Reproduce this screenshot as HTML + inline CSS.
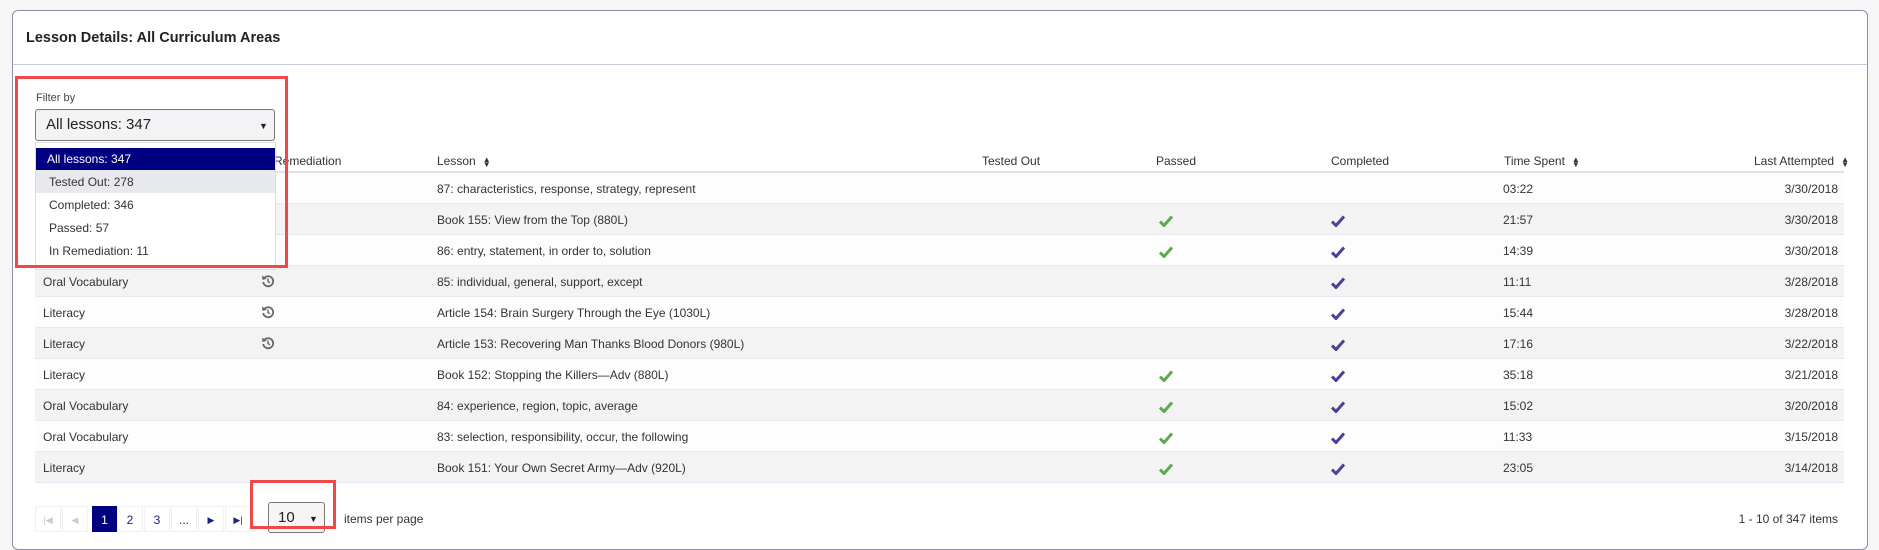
<!DOCTYPE html>
<html><head><meta charset="utf-8"><style>
*{box-sizing:border-box;margin:0;padding:0}
body{width:1879px;height:536px;background:#f6f6f7;font-family:"Liberation Sans",sans-serif;color:#333;position:relative;overflow:hidden;font-size:12px}
.panel{position:absolute;left:12px;top:10px;width:1856px;height:540px;background:#fff;border:1px solid #8e8ca6;border-radius:6px}
.title{position:absolute;left:26px;top:30px;font-size:14.5px;font-weight:bold;color:#222}
.hsep{position:absolute;left:13px;top:64px;width:1854px;height:1px;background:#c9cbdd}
.a{position:absolute;white-space:nowrap}
.row{position:absolute;left:35px;width:1809px;height:31px;border-bottom:1px solid #e3e8f5}
.g{background:#f3f3f3}.w{background:#fdfdfd}
.cell{position:absolute;top:9px;white-space:nowrap}
.chk{position:absolute;top:9px}
.sort{display:inline-block;margin-left:7px;font-size:8px;line-height:5px;vertical-align:middle}
.pb{position:absolute;top:506px;width:26px;height:26px;text-align:center;line-height:26px;border:1px solid #f0f0f0;color:#1a237e;font-size:12px}
</style></head><body>
<div class="panel"></div>
<div class="title">Lesson Details: All Curriculum Areas</div>
<div class="hsep"></div>

<div class="a" style="left:274px;top:154px">Remediation</div>
<div class="a" style="left:437px;top:154px">Lesson<span class="sort">▲<br>▼</span></div>
<div class="a" style="left:982px;top:154px">Tested Out</div>
<div class="a" style="left:1156px;top:154px">Passed</div>
<div class="a" style="left:1331px;top:154px">Completed</div>
<div class="a" style="left:1504px;top:154px">Time Spent<span class="sort">▲<br>▼</span></div>
<div class="a" style="left:1754px;top:154px">Last Attempted<span class="sort">▲<br>▼</span></div>
<div style="position:absolute;left:35px;top:171px;width:1809px;height:2px;background:#e2e2e2"></div>

<div id="rows"></div>
<script>
var d=[["","",'87: characteristics, response, strategy, represent',0,0,"03:22","3/30/2018"],
["","",'Book 155: View from the Top (880L)',1,1,"21:57","3/30/2018"],
["","",'86: entry, statement, in order to, solution',1,1,"14:39","3/30/2018"],
["Oral Vocabulary",1,'85: individual, general, support, except',0,1,"11:11","3/28/2018"],
["Literacy",1,'Article 154: Brain Surgery Through the Eye (1030L)',0,1,"15:44","3/28/2018"],
["Literacy",1,'Article 153: Recovering Man Thanks Blood Donors (980L)',0,1,"17:16","3/22/2018"],
["Literacy",0,'Book 152: Stopping the Killers—Adv (880L)',1,1,"35:18","3/21/2018"],
["Oral Vocabulary",0,'84: experience, region, topic, average',1,1,"15:02","3/20/2018"],
["Oral Vocabulary",0,'83: selection, responsibility, occur, the following',1,1,"11:33","3/15/2018"],
["Literacy",0,'Book 151: Your Own Secret Army—Adv (920L)',1,1,"23:05","3/14/2018"]];
var tops=[173,204,235,266,297,328,359,390,421,452];
var ck=function(c){return '<svg width="14" height="12" viewBox="0 0 14 12"><path d="M1 6.5 L5 10.5 L13 1.5" fill="none" stroke="'+c+'" stroke-width="3"/></svg>'};
var rem='<svg width="14" height="14" viewBox="0 0 14 14"><path d="M3.2 4.2 A5 5 0 1 1 2.2 8" fill="none" stroke="#666" stroke-width="1.8"/><path d="M1 1.5 L1.5 6 L5.8 4.8Z" fill="#666"/><path d="M7 4.5 V7.5 L9 8.8" fill="none" stroke="#666" stroke-width="1.4"/></svg>';
var h='';
d.forEach(function(r,i){
h+='<div class="row '+(i%2?'g':'w')+'" style="top:'+tops[i]+'px">';
h+='<div class="cell" style="left:8px">'+r[0]+'</div>';
if(r[1])h+='<div class="chk" style="left:226px;top:8px">'+rem+'</div>';
h+='<div class="cell" style="left:402px">'+r[2]+'</div>';
if(r[3])h+='<div class="chk" style="left:1124px;top:11px">'+ck('#5ca94d')+'</div>';
if(r[4])h+='<div class="chk" style="left:1296px;top:11px">'+ck('#4b3f97')+'</div>';
h+='<div class="cell" style="left:1468px">'+r[5]+'</div>';
h+='<div class="cell" style="right:6px">'+r[6]+'</div></div>';
});
document.getElementById('rows').innerHTML=h;
</script>

<div class="a" style="left:36px;top:92px;font-size:11px;color:#444">Filter by</div>
<div style="position:absolute;left:35px;top:109px;width:240px;height:32px;background:#f3f3f5;border:1px solid #777;border-radius:3px"></div>
<div class="a" style="left:46px;top:116px;font-size:15px;color:#222">All lessons: 347</div>
<div class="a" style="left:259px;top:121px;font-size:9px;color:#222">▼</div>
<div style="position:absolute;left:35px;top:142px;width:241px;height:128px;background:#fff;border:1px solid #ddd"></div>
<div style="position:absolute;left:36px;top:148px;width:239px;height:22px;background:#000080"></div>
<div class="a" style="left:47px;top:152px;color:#fff;font-size:12px">All lessons: 347</div>
<div style="position:absolute;left:36px;top:170px;width:239px;height:23px;background:#e8e9ed"></div>
<div class="a" style="left:49px;top:175px">Tested Out: 278</div>
<div class="a" style="left:49px;top:198px">Completed: 346</div>
<div class="a" style="left:49px;top:221px">Passed: 57</div>
<div class="a" style="left:49px;top:244px">In Remediation: 11</div>
<div style="position:absolute;left:15px;top:76px;width:273px;height:192px;border:3px solid #f04848"></div>

<div class="pb" style="left:35px;color:#ccc;font-size:9px">|◀</div>
<div class="pb" style="left:62px;color:#ccc;font-size:9px">◀</div>
<div class="pb" style="left:92px;background:#000080;color:#fff;border-color:#000080;width:25px">1</div>
<div class="pb" style="left:117px">2</div>
<div class="pb" style="left:144px">3</div>
<div class="pb" style="left:171px">...</div>
<div class="pb" style="left:198px;font-size:9px">▶</div>
<div class="pb" style="left:225px;font-size:9px">▶|</div>
<div style="position:absolute;left:268px;top:502px;width:57px;height:31px;border:1px solid #777;border-radius:3px;background:#f5f5f5"></div>
<div class="a" style="left:278px;top:509px;font-size:15px;color:#222">10</div>
<div class="a" style="left:309px;top:514px;font-size:9px;color:#222">▼</div>
<div style="position:absolute;left:250px;top:480px;width:86px;height:49px;border:3px solid #f04848"></div>
<div class="a" style="left:344px;top:512px">items per page</div>
<div class="a" style="right:41px;top:512px">1 - 10 of 347 items</div>
</body></html>
